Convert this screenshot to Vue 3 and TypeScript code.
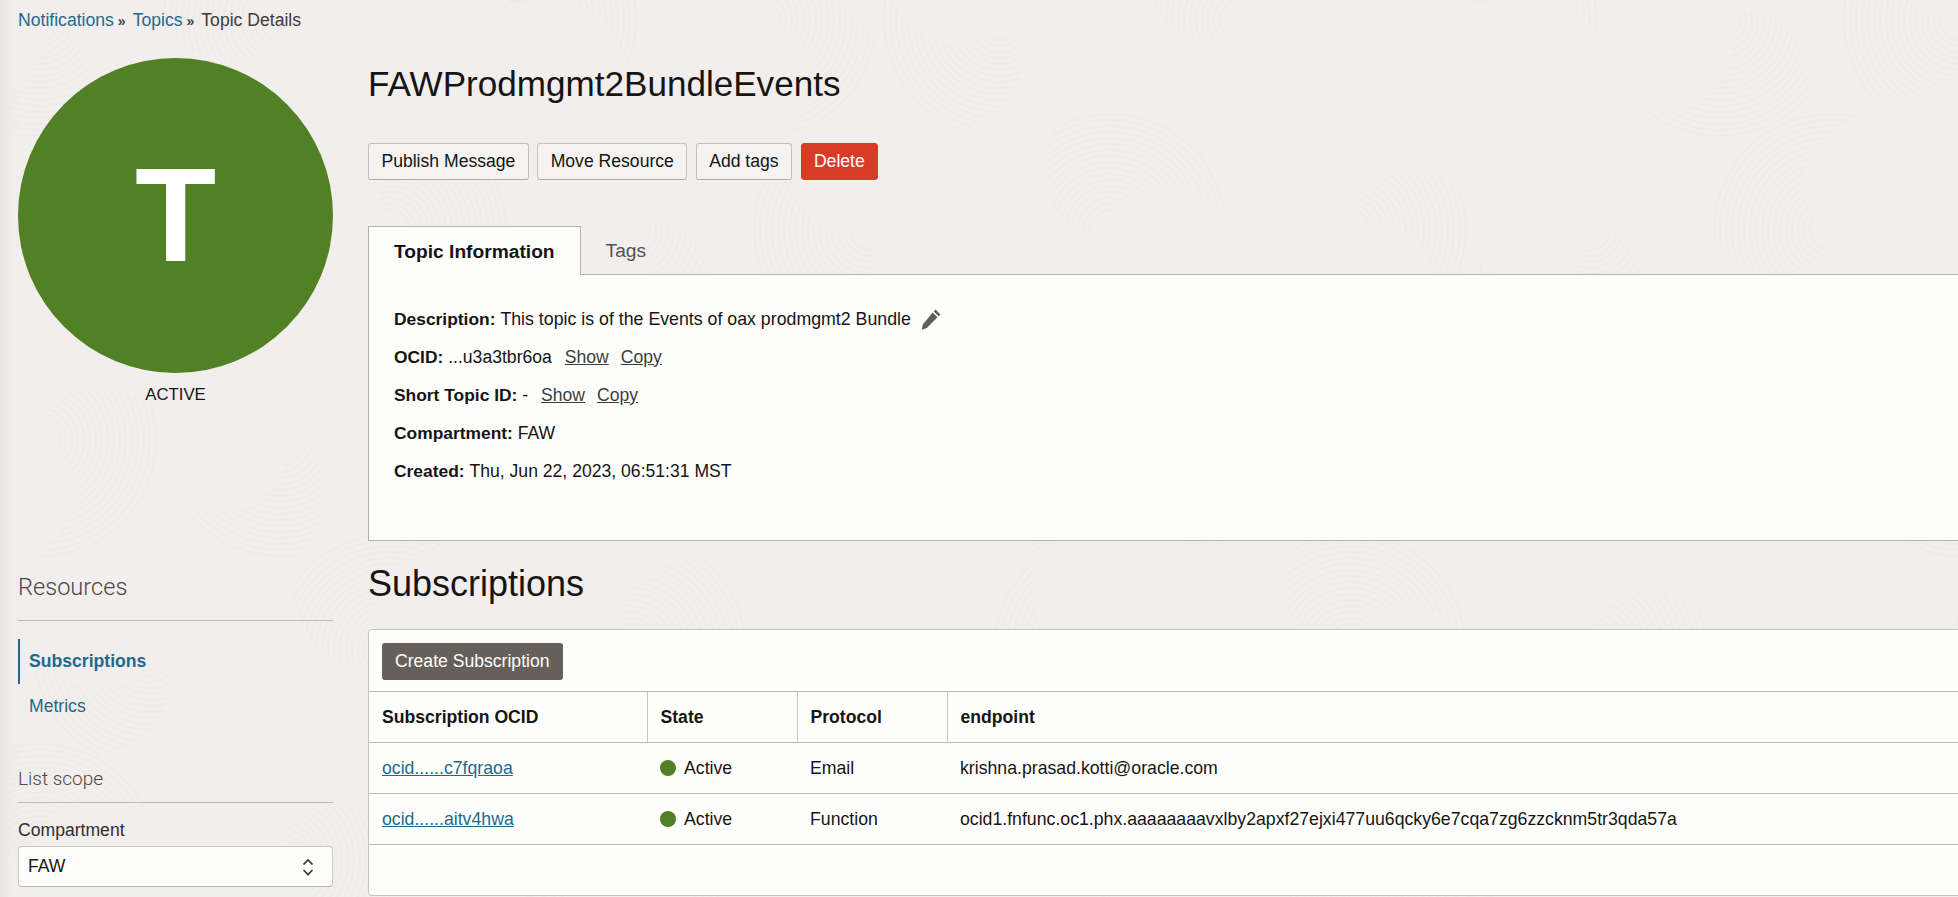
<script setup lang="ts">
import { computed } from 'vue'

interface Subscription {
  ocid: string
  state: string
  protocol: string
  endpoint: string
}

const subscriptions: Subscription[] = [
  { ocid: 'ocid......c7fqraoa', state: 'Active', protocol: 'Email', endpoint: 'krishna.prasad.kotti@oracle.com' },
  {
    ocid: 'ocid......aitv4hwa',
    state: 'Active',
    protocol: 'Function',
    endpoint: 'ocid1.fnfunc.oc1.phx.aaaaaaaavxlby2apxf27ejxi477uu6qcky6e7cqa7zg6zzcknm5tr3qda57a'
  }
]

const actions = ['Publish Message', 'Move Resource', 'Add tags']

// faint swirl texture of the console background
const swirls = computed(() => {
  const out: string[] = []
  for (let col = 0; col < 9; col++) {
    for (let row = 0; row < 5; row++) {
      const cx = 40 + col * 240 + (row % 2) * 110
      const cy = 20 + row * 210
      const start = (col * 1.7 + row * 2.3) % 6.28
      for (let r = 20; r <= 120; r += 6) {
        const a0 = start + r * 0.012
        const a1 = a0 + 1.1 + ((col + row) % 3) * 0.4
        const x0 = (cx + r * Math.cos(a0)).toFixed(1)
        const y0 = (cy + r * Math.sin(a0)).toFixed(1)
        const x1 = (cx + r * Math.cos(a1)).toFixed(1)
        const y1 = (cy + r * Math.sin(a1)).toFixed(1)
        out.push(`M${x0} ${y0}A${r} ${r} 0 0 1 ${x1} ${y1}`)
      }
    }
  }
  return out.join('')
})
</script>

<template>
  <div class="page">
    <svg class="texture" width="1958" height="897" aria-hidden="true">
      <path :d="swirls" fill="none" stroke="#e6e3e1" stroke-width="1.5" stroke-linecap="round" />
    </svg>

    <nav class="crumbs">
      <a>Notifications</a><span class="sep">»</span><a>Topics</a><span class="sep">»</span><span>Topic Details</span>
    </nav>

    <div class="layout">
      <aside class="side">
        <div class="avatar">T</div>
        <div class="status">ACTIVE</div>

        <h3 class="side-title resources">Resources</h3>
        <ul class="side-nav">
          <li class="current">Subscriptions</li>
          <li>Metrics</li>
        </ul>

        <h3 class="side-title scope">List scope</h3>
        <label class="field-label">Compartment</label>
        <div class="select">
          <span>FAW</span>
          <svg width="12" height="20" viewBox="0 0 12 20">
            <path d="M1.500 7.500 6 3l4.500 4.500M1.500 13 6 17.500l4.500-4.500" fill="none" stroke="#333" stroke-width="1.7" />
          </svg>
        </div>
      </aside>

      <main class="content">
        <h1 class="title">FAWProdmgmt2BundleEvents</h1>

        <div class="actions">
          <button v-for="a in actions" :key="a" class="btn">{{ a }}</button>
          <button class="btn danger">Delete</button>
        </div>

        <div class="tabs">
          <div class="tab active">Topic Information</div>
          <div class="tab">Tags</div>
          <div class="tab-rest"></div>
        </div>

        <section class="info">
          <p class="desc">
            <b>Description:</b> This topic is of the Events of oax prodmgmt2 Bundle
            <svg class="pencil" width="22" height="22" viewBox="0 0 22 22">
              <path d="M15.600 1.600 20.400 6.400 18.600 8.200 13.800 3.400ZM12.700 4.500 17.500 9.300 6.800 20 2.200 21.800 1.800 21.400 2.800 16.400Z" fill="#5f5f5f" />
            </svg>
          </p>
          <p><b>OCID:</b> ...u3a3tbr6oa <a class="act first">Show</a><a class="act">Copy</a></p>
          <p><b>Short Topic ID:</b> - <a class="act first">Show</a><a class="act">Copy</a></p>
          <p><b>Compartment:</b> FAW</p>
          <p><b>Created:</b> Thu, Jun 22, 2023, 06:51:31 MST</p>
        </section>

        <h2 class="heading">Subscriptions</h2>

        <section class="card">
          <div class="toolbar">
            <button class="btn-create">Create Subscription</button>
          </div>
          <table class="grid">
            <colgroup>
              <col class="c1" />
              <col class="c2" />
              <col class="c3" />
              <col />
            </colgroup>
            <thead>
              <tr>
                <th>Subscription OCID</th>
                <th>State</th>
                <th>Protocol</th>
                <th>endpoint</th>
              </tr>
            </thead>
            <tbody>
              <tr v-for="s in subscriptions" :key="s.ocid">
                <td><a class="link">{{ s.ocid }}</a></td>
                <td><span class="dot"></span>{{ s.state }}</td>
                <td>{{ s.protocol }}</td>
                <td>{{ s.endpoint }}</td>
              </tr>
            </tbody>
          </table>
        </section>
      </main>
    </div>
  </div>
</template>

<style>
html, body {
  margin: 0;
  background: #f1eeed;
}
</style>

<style scoped>
.page {
  position: relative;
  width: 1958px;
  height: 897px;
  overflow: hidden;
  box-sizing: border-box;
  padding-left: 18px;
  background: linear-gradient(to right, #e8e6e4 0, #efedeb 10px, #f1eeed 24px);
  color: #161513;
  font-family: "Liberation Sans", Arial, sans-serif;
  font-size: 17.6px;
}
.texture {
  position: absolute;
  left: 0;
  top: 0;
  opacity: 0.28;
}
.crumbs {
  position: relative;
  height: 40px;
  line-height: 40px;
  color: #3d3d3b;
}
.crumbs a {
  color: #1f6a88;
}
.sep {
  margin: 0 7px 0 4px;
  font-size: 14px;
  font-weight: 700;
  color: #444;
}
.layout {
  position: relative;
  display: flex;
}
.side {
  width: 315px;
  flex: none;
  padding-top: 18px;
}
.avatar {
  width: 315px;
  height: 315px;
  border-radius: 50%;
  background: #518125;
  color: #fff;
  font-size: 133px;
  font-weight: 700;
  line-height: 315px;
  text-align: center;
}
.status {
  margin-top: 12px;
  line-height: 20px;
  font-size: 16.8px;
  text-align: center;
}
.side-title {
  margin: 0;
  font-family: Roboto, "Liberation Sans", sans-serif;
  font-size: 23.6px;
  font-weight: 300;
  line-height: 24px;
  color: #4a4745;
  border-bottom: 1px solid #bdbab8;
}
.resources {
  margin-top: 170px;
  padding-bottom: 21px;
}
.scope {
  margin-top: 38px;
  padding-bottom: 11px;
  font-size: 19px;
}
.side-nav {
  list-style: none;
  margin: 18px 0 0;
  padding: 0;
  color: #1f6a88;
}
.side-nav li {
  height: 45px;
  line-height: 45px;
  padding-left: 9px;
  border-left: 2px solid transparent;
}
.side-nav .current {
  border-left-color: #1f6a88;
  font-weight: 700;
}
.field-label {
  display: block;
  margin-top: 17px;
  line-height: 20px;
  color: #2f2e2c;
}
.select {
  display: flex;
  align-items: center;
  justify-content: space-between;
  box-sizing: border-box;
  height: 41px;
  margin-top: 6px;
  padding: 0 18px 0 9px;
  background: #fdfdfc;
  border: 1px solid #cbc8c6;
  border-bottom-color: #b5b2b0;
  border-radius: 4px;
}
.content {
  flex: none;
  width: 1600px;
  margin-left: 35px;
}
.title {
  margin: 24px 0 0;
  font-size: 35.1px;
  font-weight: 400;
  line-height: 40px;
}
.actions {
  display: flex;
  gap: 8.5px;
  margin-top: 39px;
}
.btn,
.btn-create {
  box-sizing: border-box;
  height: 37px;
  padding: 0 12.4px;
  font: inherit;
  border-radius: 3px;
  cursor: pointer;
}
.btn {
  background: #f4f3f2;
  border: 1px solid #c3c0be;
  border-bottom-color: #aeaba9;
  color: #161513;
}
.danger {
  background: #d93c26;
  border-color: #d93c26;
  color: #fff;
}
.tabs {
  display: flex;
  height: 49px;
  margin-top: 46px;
}
.tab {
  box-sizing: border-box;
  padding: 0 25px;
  line-height: 49px;
  font-size: 19.2px;
  color: #55524f;
  border-bottom: 1px solid #b5b2b0;
}
.tab.active {
  color: #161513;
  font-weight: 700;
  background: #fdfdfc;
  border: 1px solid #b5b2b0;
  border-bottom: none;
}
.tab-rest {
  flex: 1;
  border-bottom: 1px solid #b5b2b0;
}
.info {
  box-sizing: border-box;
  height: 266px;
  padding: 25px 25px 0 25px;
  background: #fdfdfc;
  border-left: 1px solid #b5b2b0;
  border-bottom: 1px solid #b5b2b0;
}
.info p {
  display: flex;
  align-items: center;
  height: 38px;
  margin: 0;
  white-space: pre-wrap;
}
.info b {
  font-size: 17.4px;
}
.desc {
  font-size: 17.75px;
}
.pencil {
  margin-left: 4px;
}
.act {
  margin-left: 12px;
  color: #3f3d3b;
  text-decoration: underline;
}
.act.first {
  margin-left: 8px;
}
.heading {
  margin: 21px 0 0;
  font-size: 36px;
  font-weight: 400;
  line-height: 44px;
}
.card {
  box-sizing: border-box;
  height: 267px;
  margin-top: 23px;
  background: #fefefd;
  border: 1px solid #c5c3c1;
  border-radius: 4px 0 0 4px;
}
.toolbar {
  height: 61px;
  padding: 13px 0 0 13px;
  box-sizing: border-box;
}
.btn-create {
  background: #665f5a;
  border: none;
  color: #fff;
  padding: 0 13px;
}
.grid {
  width: 100%;
  table-layout: fixed;
  border-collapse: collapse;
}
.c1 {
  width: 278px;
}
.c2,
.c3 {
  width: 150px;
}
.grid th,
.grid td {
  height: 51px;
  padding: 0 12px 0 13px;
  box-sizing: border-box;
  text-align: left;
  white-space: nowrap;
  border-top: 1px solid #bdbab8;
  border-bottom: 1px solid #bdbab8;
}
.grid td {
  font-size: 17.7px;
}
.grid th {
  font-weight: 700;
}
.grid th + th {
  border-left: 1px solid #c9c7c5;
}
.link {
  color: #1f6a88;
  text-decoration: underline;
}
.dot {
  display: inline-block;
  width: 16px;
  height: 16px;
  margin-right: 8px;
  vertical-align: -2px;
  border-radius: 50%;
  background: #518125;
}
</style>
